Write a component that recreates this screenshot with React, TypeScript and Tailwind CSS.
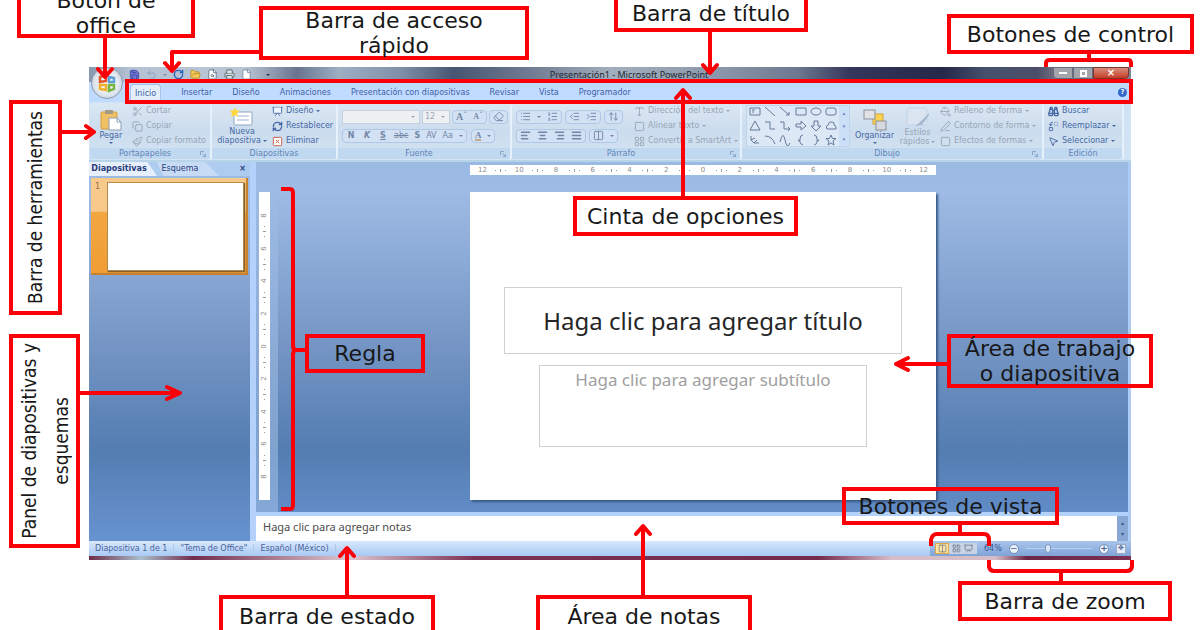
import type { ReactNode } from "react";
import {
  AlignCenter,
  AlignJustify,
  AlignLeft,
  AlignRight,
  ArrowUpDown,
  Binoculars,
  Columns2,
  Copy,
  Eraser,
  FileSearch,
  FolderOpen,
  File,
  IndentDecrease,
  IndentIncrease,
  LayoutGrid,
  List,
  ListOrdered,
  MousePointer2,
  Paintbrush,
  PaintBucket,
  PenLine,
  Presentation,
  Printer,
  RefreshCw,
  Replace,
  RotateCw,
  Save,
  Scissors,
  Square,
  SquareX,
  Type,
  Undo2,
} from "lucide-react";

const tabs = ["Insertar", "Diseño", "Animaciones", "Presentación con diapositivas", "Revisar", "Vista", "Programador"];

const shapePaths = [
  "M1 2h10v7H1zM3 4h3M3 6h2",
  "M1 1l10 9",
  "M1 1l9 8M10 6v3H7",
  "M1 2h10v7H1z",
  "M1 5.500a5 3.500 0 1 0 10 0a5 3.500 0 1 0 -10 0",
  "M3 2h6q2 0 2 2v3q0 2-2 2H3q-2 0-2-2V4q0-2 2-2z",
  "M6 1l5 9H1z",
  "M1 2h5v7h5",
  "M1 2h4v7h6M9 7l2 2-2 2",
  "M1 4h5V1l5 5-5 4V7H1z",
  "M4 1h4v5h3l-5 5-5-5h3z",
  "M2 9q-2-3 1-4q1-4 4-3q3 0 2 3q3 1 2 4z",
  "M2 2v4l3 3h5M5 9l3-3M2 6l4-2",
  "M1 2q7 0 10 8",
  "M1 8q3-12 5-2t5 3",
  "M8 1q-3 0-3 4t-2 1q2 0 2 2t3 3",
  "M4 1q3 0 3 4t2 1q-2 0-2 2t-3 3",
  "M6 1l1.500 3.500H11L8 7l1 4-3-2-3 2 1-4-3-2.500h3.500z",
];

function Caret({ className = "" }: { className?: string }) {
  return (
    <svg viewBox="0 0 4 2" className={`h-[2px]! w-[4px]! shrink-0 ${className}`} fill="currentColor">
      <path d="M0 0h4L2 2z" />
    </svg>
  );
}

function Group({ title, width, launcher = true, children }: { title: string; width: string; launcher?: boolean; children: ReactNode }) {
  return (
    <section
      className={`${width} flex shrink-0 flex-col overflow-hidden rounded-sm border-r-2 border-[#e6f1fb] bg-linear-to-b from-[#dbe7f3] via-[#cbdcee] to-[#d4e4f3]`}
    >
      <div className="flex h-[45px] items-center gap-1 px-1 pt-px">{children}</div>
      <div className="flex h-[11px] items-center bg-[#c0d9f0] text-[#6084b8]">
        <span className="flex-1 text-center">{title}</span>
        {launcher && (
          <svg viewBox="0 0 6 6" className="mr-1 h-[6px] w-[6px]" fill="none" stroke="#8ba6c6">
            <path d="M.5 4V.500H4M2.500 2.500L5 5M5.500 3v2.500H3" />
          </svg>
        )}
      </div>
    </section>
  );
}

function Command({ icon, label, caret, muted }: { icon: ReactNode; label: string; caret?: boolean; muted?: boolean }) {
  return (
    <button
      type="button"
      className={`flex h-[15px] items-center gap-[3px] whitespace-nowrap [&_svg]:size-[11px] ${muted ? "text-[#98a5b6]" : "text-[#4668a4]"}`}
    >
      {icon}
      {label}
      {caret && <Caret />}
    </button>
  );
}

function Tools({ children }: { children: ReactNode }) {
  return (
    <div className="flex h-[14px] shrink-0 items-center gap-[6px] rounded-sm border border-[#aec8e6] bg-[#d2e2f4] px-[3px] text-[#7286a5] [&_svg]:size-[11px]">
      {children}
    </div>
  );
}

function ToolButton({ label, children }: { label: string; children: ReactNode }) {
  return (
    <button type="button" aria-label={label} className="flex items-center leading-none">
      {children}
    </button>
  );
}

function OfficeButton() {
  return (
    <button
      type="button"
      aria-label="Botón de Office"
      className="absolute top-0 left-[2px] z-10 flex size-[32px] items-center justify-center rounded-full border border-[#8b9bb0] bg-radial from-white via-[#e6ebf2] to-[#b5c3d6]"
    >
      <svg viewBox="0 0 20 20" className="size-[20px]" fill="none" strokeWidth="2.500">
        <path d="M3 4l6-2v6l-6 1z" stroke="#e2552c" />
        <path d="M12 4l5 1v4h-5z" stroke="#5b9fd4" />
        <path d="M3 12l6 0v5l-6-1z" stroke="#efb12c" />
        <path d="M12 12h5v4l-5 2z" stroke="#76b443" />
      </svg>
    </button>
  );
}

function TitleBar() {
  return (
    <header className="flex h-[15px] items-center bg-[linear-gradient(90deg,#8898ac_0%,#b4c2d3_4%,#b9c5d4_15%,#68748f_20%,#9eafc4_24%,#7f8fa8_30%,#485572_35%,#737f95_43%,#a2aebc_50%,#8d99ab_60%,#6c7890_68%,#34365b_73%,#262849_82%,#45506d_86%,#4c4e68_91%,#a39a9f_95%,#7e8490_100%)]">
      <div className="flex flex-1 items-center gap-[6px] pl-[40px] [&_svg]:size-[11px]">
        <ToolButton label="Guardar"><Save fill="#7075cf" color="#3d46a5" /></ToolButton>
        <ToolButton label="Deshacer"><Undo2 color="#8ba1bd" /></ToolButton>
        <Caret className="text-[#7589a6]" />
        <ToolButton label="Rehacer"><RotateCw color="#2763bd" strokeWidth={3} /></ToolButton>
        <ToolButton label="Abrir"><FolderOpen fill="#f4ca59" color="#b98a2d" /></ToolButton>
        <ToolButton label="Vista previa"><FileSearch fill="#fff" color="#61758f" /></ToolButton>
        <ToolButton label="Imprimir"><Printer fill="#dae3e5" color="#536570" /></ToolButton>
        <ToolButton label="Nuevo"><File fill="#fff" color="#7c8b9f" /></ToolButton>
        <Caret className="ml-2 text-[#24395c]" />
      </div>
      <h1 className="font-['Noto_Sans',sans-serif] text-[9px] leading-[15px] text-[#202936]">Presentación1 - Microsoft PowerPoint</h1>
      <div className="flex flex-1 justify-end self-start pr-[2px]">
        <button type="button" aria-label="Minimizar" className="flex h-[12px] w-5 items-center justify-center rounded-bl-sm border border-[#626b7c] bg-[#a4a4ad]">
          <span className="h-[2px] w-2 bg-white" />
        </button>
        <button type="button" aria-label="Restaurar" className="flex h-[12px] w-5 items-center justify-center border border-[#626b7c] bg-[#a4a4ad]">
          <span className="size-[7px] border-2 border-white" />
        </button>
        <button
          type="button"
          aria-label="Cerrar"
          className="flex h-[12px] w-9 items-center justify-center rounded-br-sm border border-[#76352f] bg-linear-to-b from-[#d98b7c] to-[#c33a22] text-[10px] leading-none font-bold text-white"
        >
          ×
        </button>
      </div>
    </header>
  );
}

function TabStrip() {
  return (
    <nav className="flex h-[20px] items-center gap-[20px] bg-[#bfdbff] pt-px pr-1 pl-[41px] text-[#3f60a4]">
      <button type="button" className="h-[18px] self-end rounded-t-sm border border-b-0 border-[#a5c4e8] bg-[#e3eefa] px-1">
        Inicio
      </button>
      {tabs.map((tab) => (
        <button type="button" key={tab} className="whitespace-nowrap">
          {tab}
        </button>
      ))}
      <button type="button" aria-label="Ayuda" className="ml-auto size-[9px] rounded-full bg-[#3368ca] text-[7px] leading-none font-bold text-white">
        ?
      </button>
    </nav>
  );
}

function ClipboardGroup() {
  return (
    <Group title="Portapapeles" width="w-[122px]">
      <button type="button" className="flex w-[35px] flex-col items-center text-[#4668a4]">
        <svg viewBox="0 0 22 22" className="size-[22px]">
          <rect x="1" y="3" width="16" height="17" rx="1" fill="#f0c064" stroke="#d49d43" />
          <path d="M5 1h8v4H5z" fill="#a69b87" />
          <path d="M9 9h8l4 4v8H9z" fill="#fff" stroke="#8f9fb5" />
          <path d="M17 9v4h4" fill="none" stroke="#8f9fb5" />
        </svg>
        Pegar
        <Caret className="mt-px" />
      </button>
      <div>
        <Command muted icon={<Scissors />} label="Cortar" />
        <Command muted icon={<Copy />} label="Copiar" />
        <Command muted icon={<Paintbrush />} label="Copiar formato" />
      </div>
    </Group>
  );
}

function SlidesGroup() {
  return (
    <Group title="Diapositivas" width="w-[126px]" launcher={false}>
      <button type="button" className="flex w-[52px] shrink-0 flex-col items-center leading-[9px] text-[#4668a4]">
        <svg viewBox="0 0 24 20" className="h-[20px] w-[24px]">
          <rect x="4" y="5" width="18" height="13" rx="1" fill="#fff" stroke="#8fa5c1" />
          <path d="M7 9h12M7 13h12" stroke="#cedaea" strokeWidth="2" />
          <path d="M5 0l1 3 4 1-3 2 1 4-3-2-4 2 1-4-2-2 4-1z" fill="#ffd63c" />
        </svg>
        Nueva
        <span className="flex items-center gap-[2px] whitespace-nowrap">diapositiva <Caret /></span>
      </button>
      <div>
        <Command icon={<Presentation fill="#eef4fb" />} label="Diseño" caret />
        <Command icon={<RefreshCw strokeWidth={3} />} label="Restablecer" />
        <Command icon={<SquareX color="#c75a42" fill="#fff" />} label="Eliminar" />
      </div>
    </Group>
  );
}

function FontGroup() {
  return (
    <Group title="Fuente" width="w-[174px]">
      <div className="flex flex-col gap-[5px]">
        <div className="flex items-center gap-[2px]">
          <div className="flex items-center border border-[#c4d0de] bg-[#eef0f3] pr-1 text-[#a0a8b4]">
            <select aria-label="Fuente" className="h-[12px] w-[68px] appearance-none">
              <option></option>
            </select>
            <Caret />
          </div>
          <div className="flex items-center border border-[#c4d0de] bg-[#eef0f3] pr-1 text-[#a0a8b4]">
            <select aria-label="Tamaño" className="h-[12px] w-[18px] appearance-none pl-[2px]">
              <option>12</option>
            </select>
            <Caret />
          </div>
          <Tools>
            <ToolButton label="Aumentar"><span className="font-['Liberation_Serif',serif] text-[10px] font-bold">A</span>ˆ</ToolButton>
            <ToolButton label="Reducir"><span className="font-['Liberation_Serif',serif] text-[8px] font-bold">A</span>ˇ</ToolButton>
          </Tools>
          <Tools><ToolButton label="Borrar formato"><Eraser /></ToolButton></Tools>
        </div>
        <div className="flex items-center gap-1">
          <Tools>
            <button type="button" className="w-[10px] font-bold">N</button>
            <button type="button" className="w-[10px] font-bold italic">K</button>
            <button type="button" className="w-[10px] font-bold underline">S</button>
            <button type="button" className="line-through">abc</button>
            <button type="button" className="font-bold">S</button>
            <button type="button">AV</button>
            <button type="button">Aa</button>
            <Caret />
          </Tools>
          <Tools>
            <button type="button" className="border-b-2 border-[#c5a98c] font-['Liberation_Serif',serif] text-[9px] leading-[8px] font-bold">A</button>
            <Caret />
          </Tools>
        </div>
      </div>
    </Group>
  );
}

function ParagraphGroup() {
  return (
    <Group title="Párrafo" width="w-[230px]">
      <div className="flex w-[114px] shrink-0 flex-col gap-[5px]">
        <div className="flex gap-[3px]">
          <Tools>
            <ToolButton label="Viñetas"><List /></ToolButton>
            <Caret />
            <ToolButton label="Numeración"><ListOrdered /></ToolButton>
          </Tools>
          <Tools>
            <ToolButton label="Reducir nivel"><IndentDecrease /></ToolButton>
            <ToolButton label="Aumentar nivel"><IndentIncrease /></ToolButton>
          </Tools>
          <Tools><ToolButton label="Interlineado"><ArrowUpDown /></ToolButton></Tools>
        </div>
        <div className="flex gap-[3px]">
          <Tools>
            <ToolButton label="Izquierda"><AlignLeft strokeWidth={3} /></ToolButton>
            <ToolButton label="Centrar"><AlignCenter strokeWidth={3} /></ToolButton>
            <ToolButton label="Derecha"><AlignRight strokeWidth={3} /></ToolButton>
            <ToolButton label="Justificar"><AlignJustify strokeWidth={3} /></ToolButton>
          </Tools>
          <Tools>
            <ToolButton label="Columnas"><Columns2 /></ToolButton>
            <Caret />
          </Tools>
        </div>
      </div>
      <div>
        <Command muted icon={<Type />} label="Dirección del texto" caret />
        <Command muted icon={<Square />} label="Alinear texto" caret />
        <Command muted icon={<LayoutGrid />} label="Convertir a SmartArt" caret />
      </div>
    </Group>
  );
}

function DrawingGroup() {
  return (
    <Group title="Dibujo" width="w-[302px]">
      <div className="flex w-[104px] shrink-0 border border-[#bfd3ea] bg-[#dce8f6]">
        <div className="grid flex-1 grid-cols-6 items-center justify-items-center gap-y-[2px]">
          {shapePaths.map((d) => (
            <svg key={d} viewBox="0 0 12 12" className="size-[12px]" fill="none" stroke="#667a99">
              <path d={d} />
            </svg>
          ))}
        </div>
        <div className="flex w-[10px] flex-col justify-around bg-[#cbdff7] text-center text-[5px] text-[#5b7cae]">
          <button type="button" aria-label="Subir">▴</button>
          <button type="button" aria-label="Bajar">▾</button>
          <button type="button" aria-label="Más">▾</button>
        </div>
      </div>
      <button type="button" className="flex w-[41px] shrink-0 flex-col items-center text-[#4668a4]">
        <svg viewBox="0 0 24 22" className="h-[22px] w-[24px]" strokeWidth="1">
          <rect x="10" y="5" width="10" height="10" fill="#fbd34e" stroke="#d2a336" />
          <rect x="1" y="1" width="11" height="9" fill="#e1e3e5" stroke="#8b9199" />
          <rect x="13" y="12" width="10" height="9" fill="#d5d8dc" stroke="#8b9199" />
        </svg>
        Organizar
        <Caret className="mt-px" />
      </button>
      <button type="button" className="flex w-[37px] shrink-0 flex-col items-center leading-[9px] text-[#98a5b6]">
        <svg viewBox="0 0 24 22" className="h-[22px] w-[24px]">
          <rect x="1" y="2" width="20" height="17" rx="3" fill="#dbe5f1" stroke="#c4d3e4" />
          <path d="M23 7L13 17l-4 3 7-1 7-10z" fill="#a8bad0" />
        </svg>
        Estilos
        <span className="flex items-center gap-[2px]">rápidos <Caret /></span>
      </button>
      <div>
        <Command muted icon={<PaintBucket />} label="Relleno de forma" caret />
        <Command muted icon={<PenLine />} label="Contorno de forma" caret />
        <Command muted icon={<Square />} label="Efectos de formas" caret />
      </div>
    </Group>
  );
}

function Ribbon() {
  return (
    <div className="flex h-[60px] overflow-hidden border-b-2 border-[#b7d3e8] bg-[#d0e2f4] pt-px pl-px">
      <ClipboardGroup />
      <SlidesGroup />
      <FontGroup />
      <ParagraphGroup />
      <DrawingGroup />
      <Group title="Edición" width="w-[80px]" launcher={false}>
        <div>
          <Command icon={<Binoculars strokeWidth={3} />} label="Buscar" />
          <Command icon={<Replace />} label="Reemplazar" caret />
          <Command icon={<MousePointer2 />} label="Seleccionar" caret />
        </div>
      </Group>
    </div>
  );
}

function SlidesPane() {
  return (
    <aside className="w-[161px] shrink-0">
      <div className="flex h-[14px] items-center bg-[#aecbf0] text-[#293b7b]">
        <button type="button" className="h-full w-[68px] bg-[#e6effb] pr-2 font-bold [clip-path:polygon(0_0,86%_0,100%_100%,0_100%)]">
          Diapositivas
        </button>
        <button type="button" className="h-full w-[62px] bg-[#c7dbf5] pr-4 [clip-path:polygon(0_0,78%_0,100%_100%,10%_100%)]">
          Esquema
        </button>
        <button type="button" aria-label="Cerrar panel" className="ml-auto pr-1 font-bold">
          ×
        </button>
      </div>
      <div className="mx-[2px] mt-[2px] flex h-[97px] gap-2 border-r-2 border-b-2 border-[#c8812c] bg-linear-to-b from-[#f7c98a] from-35% via-[#f3a741] via-36% to-[#f09d34] pt-1 pr-[2px] pb-[2px] pl-1 text-[#92714b]">
        <span className="w-[4px]">1</span>
        <div className="flex-1 border border-[#b5884d] bg-white shadow-[1px_1px_1px_#85602f]" />
      </div>
    </aside>
  );
}

function Ruler({ values, vertical }: { values: number[]; vertical?: boolean }) {
  return (
    <div
      className={
        vertical
          ? "flex h-[308px] w-[11px] flex-col items-center justify-between bg-white py-[20px] text-[7px] leading-none text-[#8b8b8b]"
          : "flex h-[10px] w-[466px] items-center justify-between bg-white px-2 text-[7px] leading-none text-[#8b8b8b]"
      }
    >
      {values.map((value, i) => (
        <span key={i} className="contents">
          {i > 0 && (
            <span className={vertical ? "flex flex-col items-center gap-1" : "flex items-center gap-1"}>
              <i className="size-px bg-[#9a9a9a]" />
              <i className={vertical ? "h-px w-[3px] bg-[#9a9a9a]" : "h-[3px] w-px bg-[#9a9a9a]"} />
              <i className="size-px bg-[#9a9a9a]" />
            </span>
          )}
          <span className={vertical ? "flex size-[7px] -rotate-90 items-center justify-center" : "flex w-[9px] justify-center"}>{value}</span>
        </span>
      ))}
    </div>
  );
}

function Workspace() {
  return (
    <main className="flex min-w-0 flex-1 flex-col">
      <div className="flex h-[350px]">
        <div className="flex w-[22px] flex-col bg-[#9dbbe2]/60 pt-[30px] pl-[3px]">
          <Ruler vertical values={[8, 6, 4, 2, 0, 2, 4, 6, 8]} />
        </div>
        <div className="flex flex-1 flex-col items-center pt-[3px]">
          <Ruler values={[12, 10, 8, 6, 4, 2, 0, 2, 4, 6, 8, 10, 12]} />
          <div className="mt-[17px] flex h-[308px] w-[466px] flex-col items-center gap-[11px] bg-white pt-[95px] font-['Noto_Sans',sans-serif] shadow-[2px_2px_2px_#385b8a]">
            <div className="flex h-[67px] w-[398px] items-center justify-center border border-[#d0d0d0] text-[24px] text-[#262626]">
              Haga clic para agregar título
            </div>
            <div className="flex h-[82px] w-[328px] justify-center border border-[#d0d0d0] pt-[2px] text-[17px] leading-[24px] text-[#a0a0a0]">
              Haga clic para agregar subtítulo
            </div>
          </div>
        </div>
      </div>
      <div className="flex flex-1 border-t-4 border-[#b3d2fb] bg-white">
        <input
          aria-label="Notas"
          placeholder="Haga clic para agregar notas"
          className="h-[21px] min-w-0 flex-1 px-[7px] font-['Noto_Sans',sans-serif] text-[11px] placeholder:text-[#4b4b4b]"
        />
        <div className="flex w-[11px] flex-col justify-between bg-[#89a8d3] py-1 text-center text-[6px] leading-[6px] text-[#3b5580]">
          <span>▴</span>
          <span>▾</span>
        </div>
      </div>
    </main>
  );
}

function StatusBar() {
  return (
    <footer className="flex h-[15px] items-center bg-linear-to-b from-[#d8e8fc] to-[#a9c9f4] text-[#4b6499]">
      <span className="border-r border-[#b0c8e8] px-[6px]">Diapositiva 1 de 1</span>
      <span className="border-r border-[#b0c8e8] px-[6px]">"Tema de Office"</span>
      <span className="border-r border-[#b0c8e8] px-[6px]">Español (México)</span>
      <div className="ml-auto flex h-full w-[201px] items-center gap-[7px] bg-linear-to-b from-[#a9c5ec] to-[#80a4d8] px-[5px]">
        <div className="flex items-center gap-[3px] bg-[#c6d4e5] text-[#6b7686] [&_svg]:size-[9px]">
          <button type="button" aria-label="Normal" className="flex h-[11px] w-[14px] items-center justify-center border border-[#dfa641] bg-[#fde5a4]"><Columns2 /></button>
          <button type="button" aria-label="Clasificador"><LayoutGrid /></button>
          <button type="button" aria-label="Presentación" className="pr-1"><Presentation /></button>
        </div>
        <span className="text-[#35558f]">64%</span>
        <button type="button" aria-label="Alejar" className="flex size-[10px] shrink-0 items-center justify-center rounded-full border border-[#7590b8] bg-[#edf2f9] text-[9px] leading-none">−</button>
        <input
          type="range"
          aria-label="Zoom"
          defaultValue={32}
          className="h-[9px] min-w-0 flex-1 appearance-none bg-[linear-gradient(#b9cff0,#b9cff0)] bg-[length:100%_1px] bg-center bg-no-repeat [&::-webkit-slider-thumb]:h-[9px] [&::-webkit-slider-thumb]:w-[6px] [&::-webkit-slider-thumb]:appearance-none [&::-webkit-slider-thumb]:rounded-sm [&::-webkit-slider-thumb]:border [&::-webkit-slider-thumb]:border-[#8199bd] [&::-webkit-slider-thumb]:bg-[#d8e5f6]"
        />
        <button type="button" aria-label="Acercar" className="flex size-[10px] shrink-0 items-center justify-center rounded-full border border-[#7590b8] bg-[#edf2f9] text-[9px] leading-none font-bold">+</button>
        <button type="button" aria-label="Ajustar" className="flex size-[10px] shrink-0 items-center justify-center border border-[#96abc8] bg-[#e7edf6] text-[7px] leading-none">✥</button>
      </div>
    </footer>
  );
}

function Callout({ className, children }: { className: string; children: ReactNode }) {
  return (
    <div className={`absolute flex items-center justify-center border-4 border-[#fb0007] text-center leading-[25px] text-[#181818] ${className}`}>
      {children}
    </div>
  );
}

function Lines({ d, heads, viewBox }: { d: string; heads: string; viewBox: string }) {
  return (
    <svg viewBox={viewBox} className="absolute inset-0 size-full" fill="none" stroke="#fb0007" strokeWidth="4" strokeLinejoin="round">
      <path d={d} />
      <path d={heads} strokeLinecap="round" />
    </svg>
  );
}

// Each layer keeps to its own side of the window, so the labels follow the parts they name.
function Annotations() {
  const vertical = "font-['DejaVu_Sans_Condensed','DejaVu_Sans',sans-serif] text-[19px] whitespace-nowrap [writing-mode:vertical-rl]";
  return (
    <div className="pointer-events-none absolute inset-0 z-20 font-['DejaVu_Sans',sans-serif] text-[22px]">
      <div className="absolute top-0 left-0 h-[630px] w-[600px]">
        <Lines
          viewBox="0 0 600 630"
          d="M105 38V76M261 52H172V70M62 132H93M80 393H179M281 189H290Q293 189 293 193V346Q293 350 297 350H305M297 350Q293 350 293 354V505Q293 509 290 509H281M347 597V549"
          heads="M98 69l7 8 7-8M165 63l7 8 7-8M86 126l8 6-8 6M167 387l13 6-13 6M340 556l7-8 7 8"
        />
        <Callout className="-top-[24px] left-[17px] h-[62px] w-[178px] pt-3">Botón de<br />office</Callout>
        <Callout className="top-[6px] left-[259px] h-[54px] w-[270px]">Barra de acceso<br />rápido</Callout>
        <Callout className={`top-[100px] left-[9px] h-[215px] w-[53px] ${vertical}`}>
          <span className="rotate-180">Barra de herramientas</span>
        </Callout>
        <Callout className={`top-[334px] left-[9px] h-[214px] w-[71px] ${vertical}`}>
          <span className="rotate-180 leading-[32px]">Panel de diapositivas y<br />esquemas</span>
        </Callout>
        <Callout className="top-[334px] left-[305px] h-[39px] w-[120px]">Regla</Callout>
        <Callout className="top-[595px] left-[219px] h-[42px] w-[216px]">Barra de estado</Callout>
      </div>
      <div className="absolute top-0 left-1/2 h-[630px] w-[600px] -translate-x-1/2">
        <Lines
          viewBox="300 0 600 630"
          d="M710 32V72M683 197V91M643 597V527"
          heads="M703 65l7 8 7-8M676 98l7-8 7 8M636 534l7-8 7 8"
        />
        <Callout className="-top-[6px] left-[314px] h-[38px] w-[194px]">Barra de título</Callout>
        <Callout className="top-[196px] left-[273px] h-[40px] w-[225px] bg-white">Cinta de opciones</Callout>
        <Callout className="top-[595px] left-[236px] h-[42px] w-[216px]">Área de notas</Callout>
      </div>
      <div className="absolute top-0 right-0 h-[630px] w-[400px]">
        <Lines
          viewBox="800 0 400 630"
          d="M1046 67V63Q1046 60 1050 60H1128Q1131 60 1131 63V67M1089 53V60M948 364H897M931 546V540Q932 534 937 534H984Q989 534 989 540V546M960 524V534M989 560V567Q990 571 994 571H1127Q1131 571 1132 567V560M1061 571V582"
          heads="M908 358l-12 6 12 6"
        />
        <Callout className="top-[14px] left-[147px] h-[40px] w-[247px]">Botones de control</Callout>
        <Callout className="top-[334px] left-[147px] h-[54px] w-[206px]">Área de trabajo<br />o diapositiva</Callout>
        <Callout className="top-[487px] left-[42px] h-[38px] w-[217px]">Botones de vista</Callout>
        <Callout className="top-[581px] left-[158px] h-[40px] w-[214px]">Barra de zoom</Callout>
      </div>
      <div className="absolute top-[79px] right-[67px] left-[125px] h-[25px] border-4 border-[#fb0007]" />
    </div>
  );
}

export default function App() {
  return (
    <div className="relative min-h-screen overflow-hidden bg-white pt-[67px] pr-[69px] pb-[70px] pl-[89px]">
      <div className="relative flex flex-col font-['DejaVu_Sans',sans-serif] text-[8px] leading-[10px]">
        <OfficeButton />
        <TitleBar />
        <TabStrip />
        <Ribbon />
        <div className="flex h-[379px] border-r-[3px] border-[#acccf5] bg-[linear-gradient(#9bbae3_0%,#9dbbe4_8%,#7898c7_45%,#547db1_76%,#6793d0_100%)]">
          <SlidesPane />
          <div className="w-[6px] shrink-0 bg-[#b3d1fa]" />
          <Workspace />
        </div>
        <StatusBar />
        <div className="h-[4px] bg-[linear-gradient(90deg,#6e2b48_0%,#a9becb_5%,#722d4c_10%,#dcc6cf_25%,#7c3152_37%,#752b4b_70%,#d7bdc8_77%,#d7bdc8_87%,#6d2847_90%,#7b3052_100%)]" />
      </div>
      <Annotations />
    </div>
  );
}
